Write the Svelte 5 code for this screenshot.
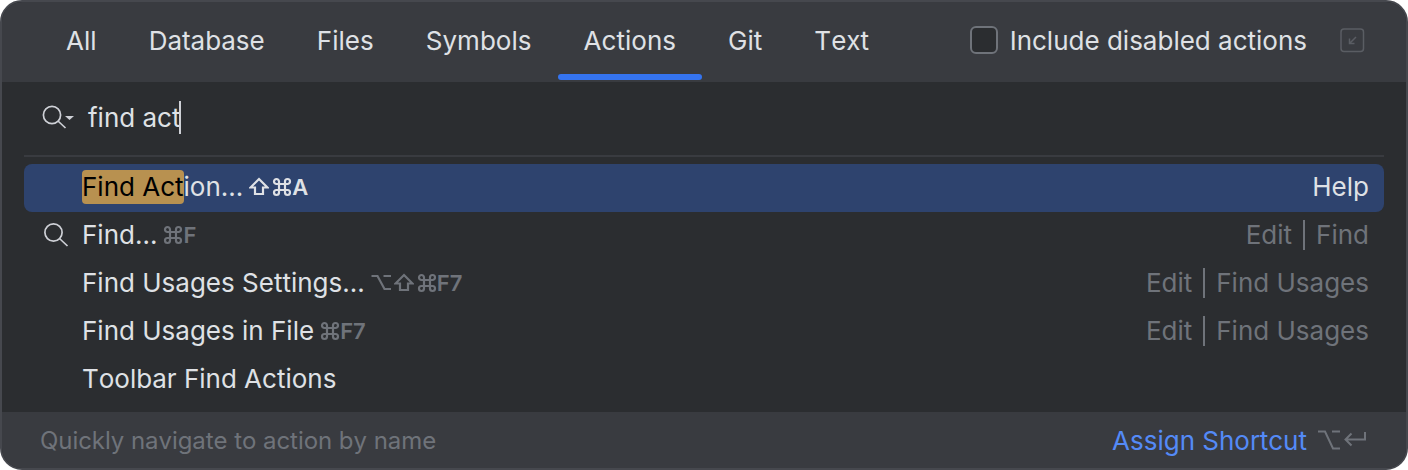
<script>
  const tabs = ['All', 'Database', 'Files', 'Symbols', 'Actions', 'Git', 'Text'];
  const rows = [
    { mark: 'Find Act', name: 'ion...', mods: ['shift', 'cmd'], key: 'A', path: ['Help'], selected: true },
    { name: 'Find...', mods: ['cmd'], key: 'F', path: ['Edit', 'Find'], icon: true },
    { name: 'Find Usages Settings...', mods: ['opt', 'shift', 'cmd'], key: 'F7', path: ['Edit', 'Find Usages'] },
    { name: 'Find Usages in File', mods: ['cmd'], key: 'F7', path: ['Edit', 'Find Usages'] },
    { name: 'Toolbar Find Actions', mods: [], key: '', path: [] }
  ];

  const modPaths = {
    shift: 'M10 2L18.5 10.5H14V17H6V10.5H1.5Z',
    cmd: 'M7 7V4.5A2.5 2.5 0 1 0 4.5 7H15.5A2.5 2.5 0 1 0 13 4.5V15.5A2.5 2.5 0 1 0 15.5 13H4.5A2.5 2.5 0 1 0 7 15.5V7Z',
    opt: 'M0.5 3H6.5L13.5 16H20M12.5 3H20'
  };
</script>

<div class="popup">
  <header class="tabbar">
    <nav class="tabs">
      {#each tabs as tab}
        <div class="tab" class:active={tab === 'Actions'}>{tab}</div>
      {/each}
    </nav>
    <label class="check">
      <span class="box"></span>
      Include disabled actions
    </label>
    <span class="pin">
      <svg width="25" height="25" viewBox="0 0 25 25" fill="none">
        <rect x="1" y="1" width="22.5" height="22.5" rx="3" stroke="#5a5d63" stroke-width="1.5"/>
        <path d="M16 9L9.5 15.5M9.5 10.5V15.5H14.5" stroke="#5a5d63" stroke-width="1.5"/>
      </svg>
    </span>
  </header>

  <div class="search">
    <svg width="36" height="28" viewBox="0 0 36 28" fill="none">
      <circle cx="12" cy="12" r="8.6" stroke="#ced0d6" stroke-width="1.7"/>
      <path d="M18 18L25.5 25" stroke="#ced0d6" stroke-width="1.7"/>
      <path d="M25 13H34L29.5 17Z" fill="#ced0d6"/>
    </svg>
    <span class="query">find act<span class="caret"></span></span>
  </div>

  <div class="sep"></div>

  <ul class="list">
    {#each rows as row}
      <li class="row" class:selected={row.selected}>
        <span class="row-icon">
          {#if row.icon}
            <svg width="28" height="26" viewBox="0 0 28 26" fill="none">
              <circle cx="11.5" cy="10.5" r="8.6" stroke="#ced0d6" stroke-width="1.7"/>
              <path d="M17.5 16.5L25.5 24" stroke="#ced0d6" stroke-width="1.7"/>
            </svg>
          {/if}
        </span>
        <span class="name">{#if row.mark}<mark>{row.mark}</mark>{/if}{row.name}</span>
        {#if row.key}
          <span class="keys">
            {#each row.mods as mod}
              <svg class="mod {mod}" width="20" height="20" viewBox="0 0 20 20" fill="none">
                <path d={modPaths[mod]} stroke="currentColor" stroke-width="2.2"/>
              </svg>
            {/each}
            <span class="key">{row.key}</span>
          </span>
        {/if}
        <span class="where">
          {#each row.path as part, i}
            {#if i > 0}<span class="bar"></span>{/if}{part}
          {/each}
        </span>
      </li>
    {/each}
    <li class="row">
      <span class="where"><span class="bar peek"></span></span>
    </li>
  </ul>

  <footer class="footer">
    <span class="hint">Quickly navigate to action by name</span>
    <span class="assign">Assign Shortcut</span>
    <svg class="assign-keys" width="48" height="20" viewBox="0 0 48 20" fill="none">
      <path d="M0 1.5H7L15 18.5H22M14 1.5H22M47 2V9.5H28M33.5 3.5L27.5 9.5L33.5 15.5" stroke="#6f737a" stroke-width="2"/>
    </svg>
  </footer>
</div>

<style>
  :global(body) {
    margin: 0;
    background: #fff;
  }

  .popup {
    width: 1408px;
    height: 470px;
    box-sizing: border-box;
    display: flex;
    flex-direction: column;
    overflow: hidden;
    background: #2b2d30;
    border: 2px solid #46484e;
    border-radius: 22px;
    font-family: Inter, "Liberation Sans", sans-serif;
    font-size: 26px;
    font-kerning: none;
    color: #dfe1e5;
  }

  .tabbar {
    height: 80px;
    flex: none;
    box-sizing: border-box;
    display: flex;
    align-items: center;
    background: #393b40;
    padding: 0 41px 4px 38px;
  }

  .tabs {
    display: flex;
    align-self: stretch;
    flex: 1;
    letter-spacing: 0.03px;
  }

  .tab {
    display: flex;
    align-items: center;
    padding: 0 26px;
    position: relative;
  }

  .tab.active::after {
    content: '';
    position: absolute;
    left: 0;
    right: 0;
    bottom: -2px;
    height: 6px;
    border-radius: 3px;
    background: #3574f0;
  }

  .check {
    display: flex;
    align-items: center;
    gap: 12px;
  }

  .box {
    width: 28px;
    height: 28px;
    box-sizing: border-box;
    border: 2px solid #6f737a;
    border-radius: 6px;
    background: #2b2d30;
  }

  .pin {
    display: flex;
    margin-left: 33px;
  }

  .search {
    height: 73px;
    flex: none;
    box-sizing: border-box;
    display: flex;
    align-items: center;
    padding: 0 0 3px 38px;
    gap: 12px;
  }

  .query {
    display: flex;
    align-items: center;
  }

  .caret {
    width: 2px;
    height: 33px;
    margin-left: -1px;
    background: #ced0d6;
  }

  .sep {
    height: 2px;
    margin: 0 22px;
    flex: none;
    background: #393b40;
  }

  .list {
    list-style: none;
    margin: 7px 22px 0;
    padding: 0;
    flex: 1;
    min-height: 0;
    overflow: hidden;
  }

  .row {
    height: 48px;
    box-sizing: border-box;
    display: flex;
    align-items: center;
    border-radius: 8px;
    padding: 0 15px 2px 18px;
    line-height: 32px;
  }

  .row-icon {
    width: 40px;
    flex: none;
    display: flex;
  }

  .row.selected {
    background: #2e436e;
  }

  mark {
    display: inline-block;
    padding: 1px 0;
    background: #b89150;
    color: #000;
    border-radius: 4px;
  }

  .keys {
    display: flex;
    align-items: center;
    margin-left: 6px;
    font-weight: 600;
    font-size: 22px;
    color: #6f737a;
  }

  .selected .keys {
    color: #dfe1e5;
  }

  .mod {
    margin-right: 3px;
  }

  .mod.cmd {
    margin-right: 0;
  }

  .where {
    margin-left: auto;
    display: flex;
    align-items: center;
    color: #6f737a;
  }

  .selected .where {
    color: #dfe1e5;
  }

  .bar {
    width: 2px;
    height: 30px;
    margin: 0 11px;
    background: #6f737a;
  }

  .bar.peek {
    margin-right: 202px;
  }

  .footer {
    height: 56px;
    flex: none;
    display: flex;
    align-items: center;
    background: #393b40;
    padding: 0 40px 0 38px;
    font-size: 24px;
    color: #6f737a;
  }

  .hint {
    flex: 1;
    letter-spacing: -0.05px;
  }

  .assign {
    font-size: 26px;
    color: #548af7;
  }

  .assign-keys {
    margin-left: 11px;
  }
</style>
